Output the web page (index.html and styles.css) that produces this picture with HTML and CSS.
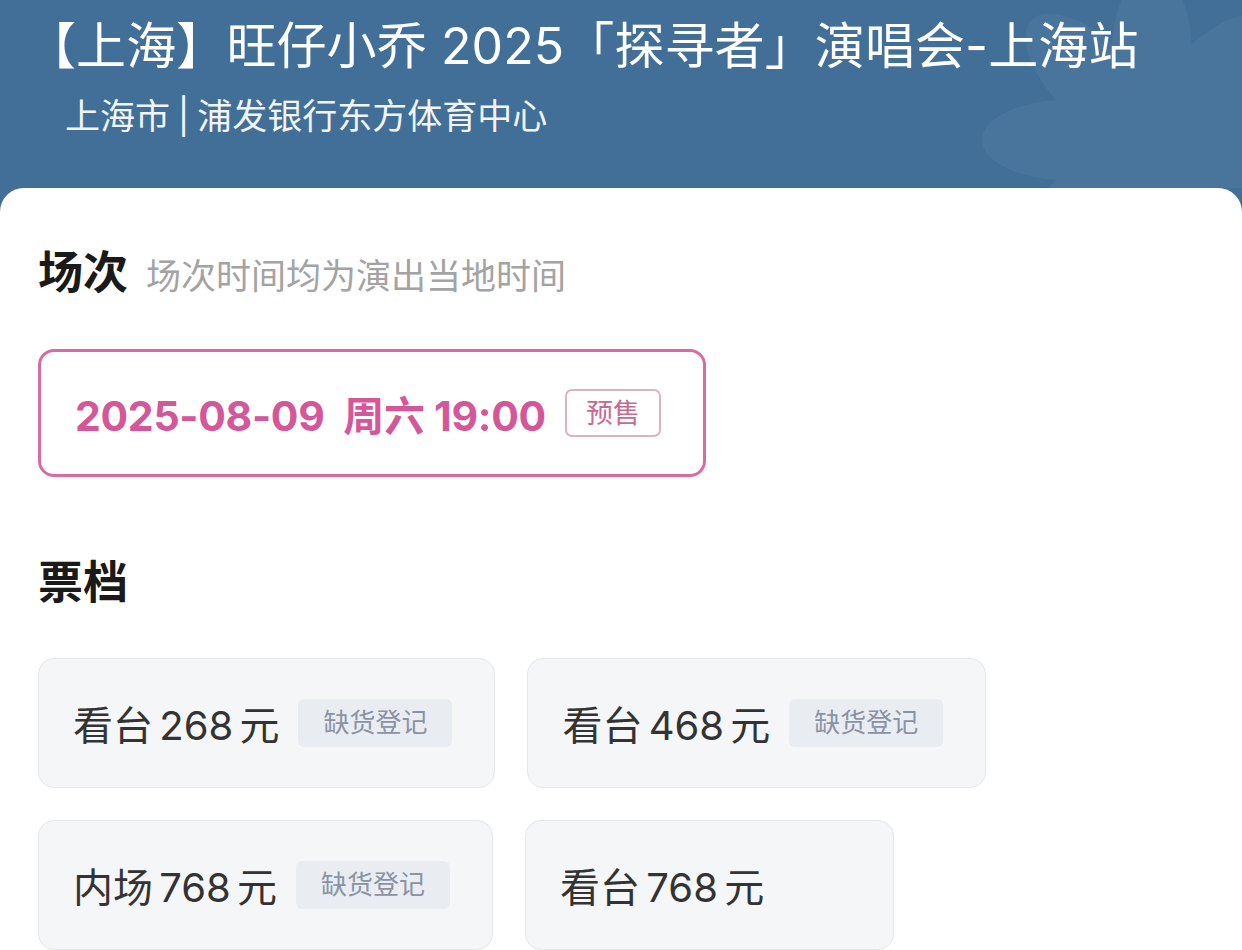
FILE: index.html
```html
<!DOCTYPE html>
<html lang="zh-CN">

<head>
    <meta charset="UTF-8">
    <title>旺仔小乔 2025「探寻者」演唱会-上海站</title>
    <link rel="stylesheet" href="styles.css">
</head>

<body>
    <header class="hero">
        <svg class="hero-flower" width="360" height="300" viewBox="0 0 360 300" aria-hidden="true">
            <g transform="translate(210 150)" fill="#ffffff">
                <ellipse cx="0" cy="-85" rx="40" ry="85" />
                <ellipse cx="0" cy="-85" rx="40" ry="85" transform="rotate(45)" />
                <ellipse cx="0" cy="-85" rx="40" ry="85" transform="rotate(90)" />
                <ellipse cx="0" cy="-85" rx="40" ry="85" transform="rotate(135)" />
                <ellipse cx="0" cy="-85" rx="40" ry="85" transform="rotate(180)" />
                <ellipse cx="0" cy="-85" rx="40" ry="85" transform="rotate(225)" />
                <ellipse cx="0" cy="-85" rx="40" ry="85" transform="rotate(270)" />
                <ellipse cx="0" cy="-85" rx="40" ry="85" transform="rotate(315)" />
            </g>
        </svg>
        <h1 class="hero-title">【上海】旺仔小乔 2025「探寻者」演唱会-上海站</h1>
        <p class="hero-venue">上海市 | 浦发银行东方体育中心</p>
    </header>

    <main class="panel">
        <section class="block">
            <div class="block-head">
                <h2 class="block-title">场次</h2>
                <span class="block-note">场次时间均为演出当地时间</span>
            </div>
            <div class="session">
                <span class="session-time">2025-08-09&nbsp;&nbsp;周六 19:00</span>
                <span class="tag-pre">预售</span>
            </div>
        </section>

        <section class="block block-tickets">
            <h2 class="block-title">票档</h2>
            <div class="tickets">
                <div class="ticket">
                    <span class="ticket-name">看台 268 元</span>
                    <span class="tag-soldout">缺货登记</span>
                </div>
                <div class="ticket">
                    <span class="ticket-name">看台 468 元</span>
                    <span class="tag-soldout">缺货登记</span>
                </div>
                <div class="ticket">
                    <span class="ticket-name">内场 768 元</span>
                    <span class="tag-soldout">缺货登记</span>
                </div>
                <div class="ticket">
                    <span class="ticket-name">看台 768 元</span>
                </div>
            </div>
        </section>
    </main>
</body>

</html>
```

FILE: styles.css
```css
/* page */
html,
body {
    margin: 0;
    height: 100%;
}

body {
    background: #416f98;
    font-family: "Inter", "Noto Sans CJK SC", sans-serif;
    color: #222;
    overflow: hidden;
}

/* blue header */
.hero {
    position: relative;
    height: 188px;
    padding: 0 0 0 26px;
    box-sizing: border-box;
    color: #fff;
    overflow: hidden;
}

.hero-flower {
    position: absolute;
    right: -60px;
    top: -10px;
    opacity: 0.045;
}

.hero-title {
    position: relative;
    margin: 0;
    padding-top: 14px;
    font-size: 50px;
    font-weight: 400;
    line-height: 64px;
    letter-spacing: 0.1px;
}

.hero-venue {
    position: relative;
    margin: 18px 0 0 39px;
    font-size: 35px;
    line-height: 40px;
    word-spacing: -2px;
    color: #f2f5f8;
}

/* white panel */
.panel {
    background: #fff;
    border-radius: 24px 24px 0 0;
    padding: 60px 38px 0;
    min-height: 762px;
    box-sizing: border-box;
}

.block-head {
    display: flex;
    align-items: baseline;
    gap: 18px;
}

.block-title {
    margin: 0;
    font-size: 45px;
    font-weight: 700;
    line-height: 48px;
    color: #1a1a1a;
}

.block-note {
    font-size: 35px;
    color: #a3a3a3;
}

/* session */
.session {
    display: inline-flex;
    align-items: center;
    gap: 19px;
    margin-top: 50px;
    width: 668px;
    height: 128px;
    padding-left: 34px;
    box-sizing: border-box;
    border: 3px solid #d96ba2;
    border-radius: 16px;
}

.session-time {
    font-size: 41px;
    font-weight: 700;
    letter-spacing: -0.3px;
    color: #d4579a;
}

.tag-pre {
    padding: 0 19px;
    height: 48px;
    line-height: 46px;
    box-sizing: border-box;
    border: 2px solid #ddb3c4;
    border-radius: 7px;
    font-size: 27px;
    color: #c76a91;
}

/* tickets */
.block-tickets {
    margin-top: 82px;
}

.tickets {
    display: flex;
    flex-wrap: wrap;
    gap: 32px;
    margin-top: 51px;
}

.ticket {
    display: flex;
    align-items: center;
    gap: 19px;
    min-width: 369px;
    min-height: 130px;
    padding: 0 42px 0 34px;
    box-sizing: border-box;
    background: #f5f6f8;
    border: 1px solid #e6e7ea;
    border-radius: 16px;
}

.ticket-name {
    font-size: 40px;
    word-spacing: -5px;
    color: #333;
}

.tag-soldout {
    height: 48px;
    line-height: 48px;
    padding: 0 25px;
    border-radius: 6px;
    background: #e9edf1;
    font-size: 26px;
    color: #8a93a6;
}
```
